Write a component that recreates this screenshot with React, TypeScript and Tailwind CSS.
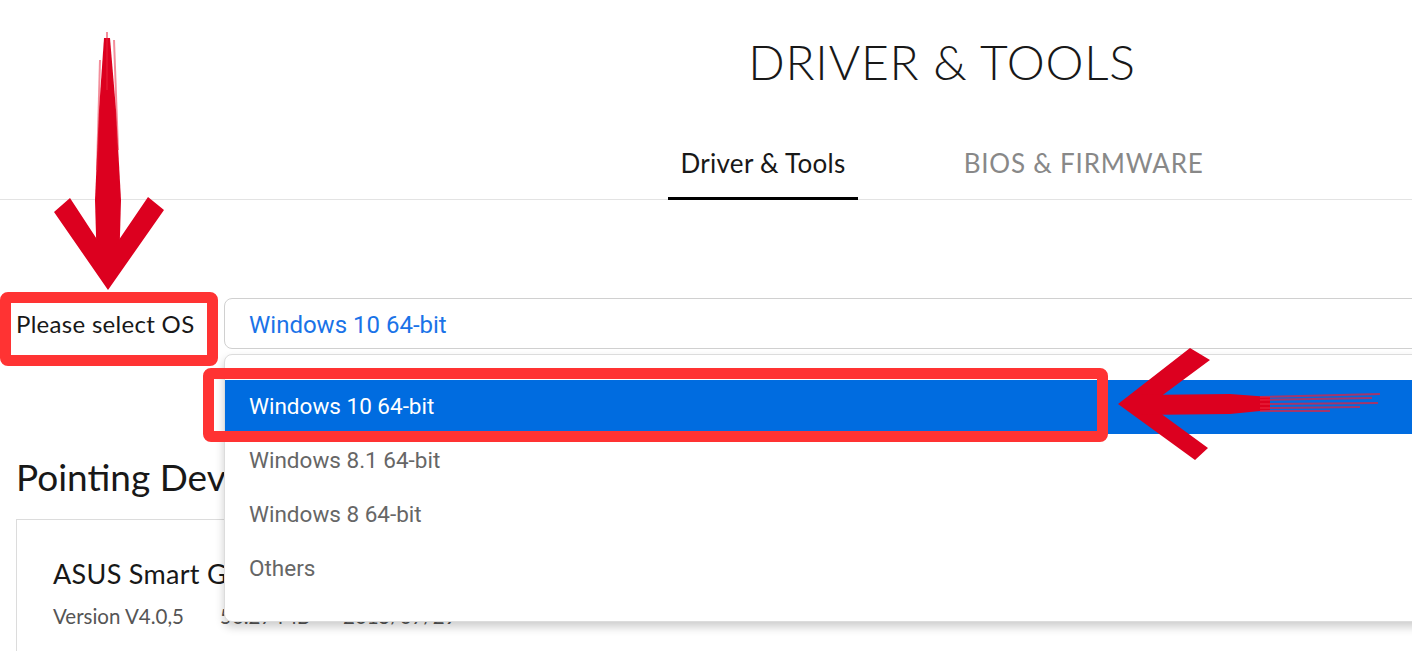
import React from 'react'

const osOptions = ['Windows 10 64-bit', 'Windows 8.1 64-bit', 'Windows 8 64-bit', 'Others']

function DownArrow() {
  return (
    <svg
      className="pointer-events-none absolute left-0 top-0"
      width="200"
      height="300"
      viewBox="0 0 200 300"
    >
      <g fill="#dc001f">
        <polygon points="104,38 110,38 116,110 121,200 119,270 97,270 95,200 99,110" />
        <polygon points="54,212 70,198 104,250 112,250 148,197 164,210 108,290" />
      </g>
      <g stroke="#e8203a" strokeWidth="2" opacity="0.5">
        <line x1="100" y1="60" x2="97" y2="170" />
        <line x1="114" y1="40" x2="118" y2="150" />
        <line x1="107" y1="32" x2="107" y2="90" />
      </g>
    </svg>
  )
}

function LeftArrow() {
  return (
    <svg
      className="pointer-events-none absolute left-[1100px] top-[340px]"
      width="300"
      height="130"
      viewBox="1100 340 300 130"
    >
      <g fill="#dc001f">
        <polygon points="1118,404 1190,348 1210,360 1156,400 1156,410 1208,448 1195,460" />
        <polygon points="1140,395 1230,394 1270,397 1270,410 1230,414 1140,415" />
      </g>
      <g stroke="#e8203a" strokeWidth="2" opacity="0.7">
        <line x1="1260" y1="397" x2="1380" y2="394" />
        <line x1="1260" y1="400" x2="1372" y2="398" />
        <line x1="1260" y1="404" x2="1378" y2="403" />
        <line x1="1260" y1="408" x2="1360" y2="407" />
        <line x1="1260" y1="411" x2="1330" y2="411" />
      </g>
    </svg>
  )
}

export default function App() {
  return (
    <div className="relative h-[651px] w-[1412px] overflow-hidden bg-white font-['Lato',sans-serif] text-[#181818]">
      <div className="w-[1884px]">
        <header className="border-b border-[#e3e3e3] pt-[38px]">
          <h1 className="text-center text-[48px] font-light leading-[48px] tracking-[0.8px]">
            DRIVER &amp; TOOLS
          </h1>
          <nav className="mt-[62px] flex justify-center gap-[94px]">
            <div className="-mb-px border-b-[3px] border-black px-3 pb-[19px] text-[26px] leading-[30px] tracking-[0.3px]">
              Driver &amp; Tools
            </div>
            <div className="-mb-px border-b-[3px] border-transparent px-3 pb-[19px] text-[26px] leading-[30px] tracking-[0.8px] text-[#888]">
              BIOS &amp; FIRMWARE
            </div>
          </nav>
        </header>

        <section className="mt-[98px] flex items-center">
          <div className="w-[224px] pl-4 text-[24px] leading-[28px] tracking-[0.3px]">Please select OS</div>
          <div className="relative flex-1 pr-4">
            <div className="flex h-[51px] items-center rounded-lg border border-[#d0d0d0] pl-[24px] pt-[2px] font-['Roboto',sans-serif] text-[24px] text-[#1a73e8]">
              Windows 10 64-bit
            </div>
            <ul className="absolute left-0 right-4 top-[56px] z-10 rounded-lg border border-[#dcdcdc] bg-white py-[25px] font-['Roboto',sans-serif] text-[22.5px] text-[#666] shadow-[0_5px_10px_rgba(0,0,0,0.2)]">
              {osOptions.map((os, i) => (
                <li
                  key={os}
                  className={
                    i === 0
                      ? 'flex h-[54px] items-center bg-[#006ce0] pl-[24px] text-white'
                      : 'flex h-[54px] items-center pl-[24px]'
                  }
                >
                  {os}
                </li>
              ))}
            </ul>
          </div>
        </section>

        <section className="px-4">
          <h2 className="mt-[108px] text-[37px] leading-[40px]">Pointing Device</h2>
          <div className="mt-[22px] h-[200px] border border-[#dcdcdc] px-[36px] pt-[39px]">
            <div className="text-[27px] leading-[30px] tracking-[0.3px]">ASUS Smart Gesture</div>
            <div className="mt-[15px] flex text-[20.5px] leading-[24px] text-[#555]">
              <span className="w-[167px]">Version V4.0,5</span>
              <span className="w-[123px]">50.27 MB</span>
              <span>2015/07/29</span>
            </div>
          </div>
        </section>
      </div>

      <div className="pointer-events-none absolute left-0 top-[292px] z-20 h-[74px] w-[218px] rounded-[8px] border-[11px] border-[#ff3333]" />
      <div className="pointer-events-none absolute left-[203px] top-[368px] z-20 h-[74px] w-[905px] rounded-[8px] border-[11px] border-[#ff3333]" />
      <div className="absolute inset-0 z-30 pointer-events-none">
        <DownArrow />
        <LeftArrow />
      </div>
    </div>
  )
}
